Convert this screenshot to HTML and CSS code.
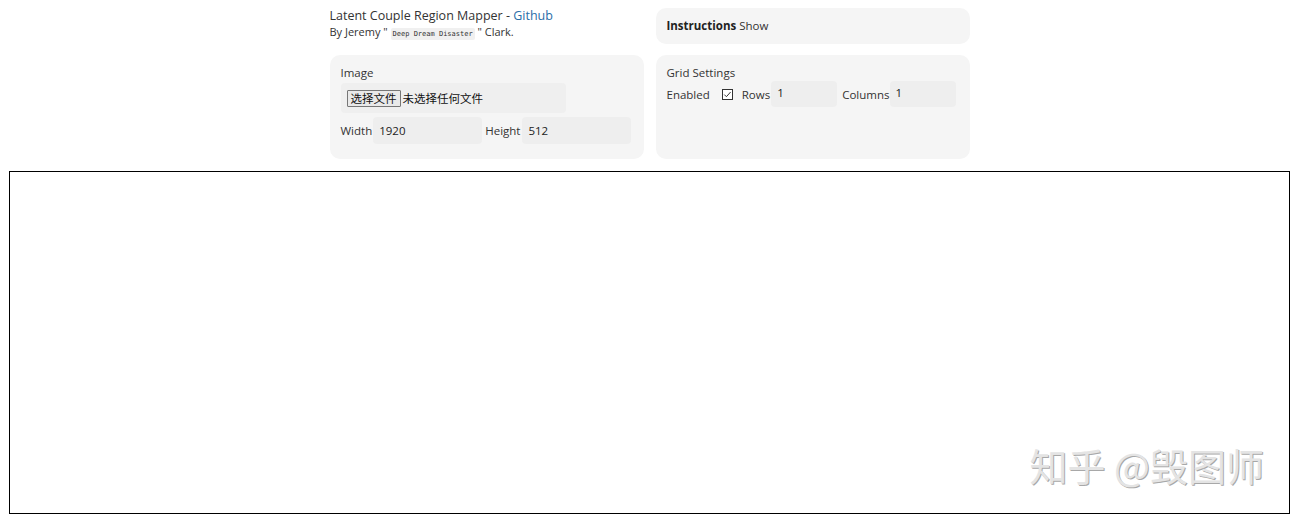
FILE: index.html
```html
<!DOCTYPE html>
<html lang="en">
<head>
<meta charset="utf-8">
<title>Latent Couple Region Mapper</title>
<link rel="stylesheet" href="styles.css">
</head>
<body>
<div class="container">
  <div class="row top-row">
    <div class="header">
      <div class="title">Latent Couple Region Mapper - <a class="link" href="#">Github</a></div>
      <div class="byline">By Jeremy " <code class="chip">Deep Dream Disaster</code> " Clark.</div>
    </div>
    <div class="card instructions"><b>Instructions</b> Show</div>
  </div>
  <div class="row settings-row">
    <div class="card panel">
      <div class="label">Image</div>
      <div class="file-box"><span class="file-btn">选择文件</span><span class="file-text">未选择任何文件</span></div>
      <div class="field-row">
        <span class="field-label">Width</span><span class="input w-wide">1920</span>
        <span class="field-label gap">Height</span><span class="input w-wide">512</span>
      </div>
    </div>
    <div class="card panel">
      <div class="label">Grid Settings</div>
      <div class="field-row grid-row">
        <span class="field-label">Enabled</span>
        <span class="checkbox"><svg width="11" height="11" viewBox="0 0 11 11"><rect x="0.5" y="0.5" width="10" height="10" fill="#fff" stroke="#333"/><path d="M2.3 5.6 L4.4 7.7 L8.6 3" fill="none" stroke="#333" stroke-width="1"/></svg></span>
        <span class="field-label">Rows</span><span class="input w-small">1</span>
        <span class="field-label gap-s">Columns</span><span class="input w-small">1</span>
      </div>
    </div>
  </div>
</div>
<div class="canvas">
  <div class="watermark">知乎 @毁图师</div>
</div>
</body>
</html>
```
FILE: styles.css
```css
body {
  margin: 8px;
  font-family: "Open Sans", "Noto Sans", "Noto Sans CJK SC", sans-serif;
  font-size: 12px;
  color: #333;
  background: #fff;
}
.container {
  width: 640px;
  margin: 0 auto;
  padding-left: 1px;
}
.row {
  display: grid;
  grid-template-columns: 314px 314px;
  column-gap: 12px;
}
.top-row { align-items: start; }
.title {
  font-size: 12.5px;
  line-height: 16px;
  color: #333;
}
.link { color: #2a6ea8; text-decoration: none; }
.byline {
  font-size: 11px;
  line-height: 15px;
  margin-top: 0;
}
.chip {
  font-family: "DejaVu Sans Mono", monospace;
  font-size: 7px;
  background: #f0f0f0;
  padding: 2px 2px;
  border-radius: 2px;
}
.card {
  background: #f5f5f5;
  border-radius: 10px;
}
.instructions {
  height: 36px;
  box-sizing: border-box;
  padding: 10px 11px;
  font-size: 11.5px;
  line-height: 16px;
}
.instructions b { font-weight: 700; color: #222; }
.settings-row { margin-top: 11px; }
.panel {
  height: 104px;
  box-sizing: border-box;
  padding: 10px 11px;
}
.label { font-size: 11.5px; line-height: 16px; }
.file-box {
  margin-top: 2px;
  width: 225px;
  height: 30px;
  box-sizing: border-box;
  background: #efefef;
  border-radius: 4px;
  display: flex;
  align-items: center;
  padding-left: 6px;
  font-family: "Noto Sans CJK SC", sans-serif;
  font-size: 11.5px;
}
.file-btn {
  border: 1px solid #767676;
  background: #e9e9e9;
  padding: 0 3px;
  line-height: 15px;
  border-radius: 1px;
  color: #111;
}
.file-text { margin-left: 2px; color: #111; }
.field-row {
  display: flex;
  align-items: center;
  margin-top: 4px;
}
.field-label { font-size: 11.5px; margin-right: 1px; }
.gap { margin-left: 3px; margin-right: 2px; }
.gap-s { margin-left: 5px; margin-right: 0; }
.input {
  background: #eeeeee;
  border-radius: 4px;
  height: 27px;
  line-height: 27px;
  box-sizing: border-box;
  padding-left: 6px;
  font-size: 11.5px;
  color: #222;
}
.w-wide { width: 109px; }
.w-small { width: 66px; height: 26px; line-height: 24px; }
.grid-row { margin-top: 0; }
.checkbox {
  display: inline-flex;
  margin: 0 9px 0 11px;
}
.canvas {
  position: relative;
  margin-top: 12px;
  margin-left: 1px;
  width: 1281px;
  height: 343px;
  box-sizing: border-box;
  border: 1px solid #000;
}
.watermark {
  position: absolute;
  right: 25px;
  bottom: 21px;
  font-family: "Noto Sans CJK SC", sans-serif;
  font-size: 38px;
  color: #e4e4e4;
  text-shadow: 1px 1px 0 #a8a8a8;
}
```
